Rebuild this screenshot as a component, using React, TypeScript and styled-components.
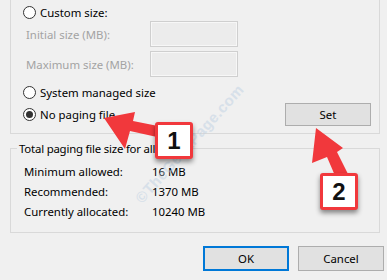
import styled, { createGlobalStyle } from "styled-components"

const Global = createGlobalStyle`
    html, body {
        margin: 0;
        padding: 0;
        background: #f0f0f0;
    }
    body {
        font-family: "Noto Sans", "Open Sans", sans-serif;
        font-size: 11.4px;
        color: #000;
    }
`

export default function App() {
    return (
        <Page>
            <Global />
            <TopGroup>
                <RadioRow>
                    <Radio />
                    <span>Custom size:</span>
                </RadioRow>
                <FieldRow>
                    <FieldLabel>Initial size (MB):</FieldLabel>
                    <TextBox disabled />
                </FieldRow>
                <FieldRow $gap={4}>
                    <FieldLabel>Maximum size (MB):</FieldLabel>
                    <TextBox disabled />
                </FieldRow>
                <RadioRow $top={7}>
                    <Radio />
                    <span>System managed size</span>
                </RadioRow>
                <SetRow>
                    <RadioRow>
                        <Radio $checked />
                        <span>No paging file</span>
                    </RadioRow>
                    <Button $w={86} $h={23}>Set</Button>
                </SetRow>
            </TopGroup>

            <TotalGroup>
                <Legend>Total paging file size for all drives</Legend>
                <StatRow>
                    <StatLabel>Minimum allowed:</StatLabel>
                    <span>16 MB</span>
                </StatRow>
                <StatRow>
                    <StatLabel>Recommended:</StatLabel>
                    <span>1370 MB</span>
                </StatRow>
                <StatRow>
                    <StatLabel>Currently allocated:</StatLabel>
                    <span>10240 MB</span>
                </StatRow>
            </TotalGroup>

            <Footer>
                <Button $w={86} $h={25} $primary>OK</Button>
                <Button $w={86} $h={25}>Cancel</Button>
            </Footer>

            <Watermark>©TheGeekPage.com</Watermark>

            <Arrows width="387" height="280" viewBox="0 0 387 280">
                <polygon
                    fill="#f1383c"
                    points="104,118 135,112 133,121 158,126 157,137 130,131 125,149"
                />
                <polygon
                    fill="#f1383c"
                    points="316,128 343,148 337,152 348,174 336,178 327,157 312,163"
                />
            </Arrows>
            <Step $x={155} $y={122}>1</Step>
            <Step $x={320} $y={173}>2</Step>
        </Page>
    )
}

const Page = styled.div`
    position: relative;
    width: 387px;
    height: 280px;
    overflow: hidden;
    padding-left: 10px;
    box-sizing: border-box;
`

const TopGroup = styled.div`
    margin-top: -10px;
    width: 370px;
    box-sizing: border-box;
    border: 1px solid #d9d9d9;
    padding: 13px 8px 7px 12px;
    display: flex;
    flex-direction: column;
`

const RadioRow = styled.label<{ $top?: number }>`
    display: flex;
    align-items: center;
    gap: 4px;
    height: 17px;
    margin-top: ${(p) => p.$top || 0}px;
    white-space: nowrap;
`

const Radio = styled.span<{ $checked?: boolean }>`
    width: 13px;
    height: 13px;
    box-sizing: border-box;
    border-radius: 50%;
    border: 1px solid #333;
    background: #fff;
    display: flex;
    align-items: center;
    justify-content: center;
    &::after {
        content: "";
        display: ${(p) => (p.$checked ? "block" : "none")};
        width: 7px;
        height: 7px;
        border-radius: 50%;
        background: #333;
    }
`

const FieldRow = styled.div<{ $gap?: number }>`
    display: flex;
    align-items: center;
    height: 26px;
    margin-top: ${(p) => p.$gap || 0}px;
`

const FieldLabel = styled.span`
    width: 124px;
    padding-left: 3px;
    color: #a3a3a3;
    white-space: nowrap;
`

const TextBox = styled.input`
    width: 88px;
    height: 26px;
    box-sizing: border-box;
    border: 1px solid #cfcfcf;
    box-shadow: inset 0 0 0 1px #f7f7f7;
    background: #ececec;
    margin: 0;
`

const SetRow = styled.div`
    display: flex;
    align-items: center;
    justify-content: space-between;
    margin-top: 2px;
    height: 23px;
`

const Button = styled.button<{ $w: number; $h: number; $primary?: boolean }>`
    width: ${(p) => p.$w}px;
    height: ${(p) => p.$h}px;
    box-sizing: border-box;
    margin: 0;
    padding: 0;
    font: inherit;
    color: #000;
    background: #e1e1e1;
    border: ${(p) => (p.$primary ? "2px solid #0078d7" : "1px solid #adadad")};
`

const TotalGroup = styled.fieldset`
    margin: 7px 0 0 0;
    width: 370px;
    box-sizing: border-box;
    border: 1px solid #d9d9d9;
    padding: 5px 0 11px 13px;
    min-height: 0;
`

const Legend = styled.legend`
    padding: 0 2px;
    margin-left: -7px;
    letter-spacing: -0.2px;
    white-space: nowrap;
`

const StatRow = styled.div`
    display: flex;
    height: 20px;
    align-items: center;
`

const StatLabel = styled.span`
    width: 128px;
`

const Footer = styled.div`
    display: flex;
    gap: 9px;
    margin-top: 13px;
    padding-left: 193px;
`

const Watermark = styled.div`
    position: absolute;
    left: 138px;
    top: 192px;
    transform: rotate(-48deg);
    transform-origin: left center;
    font-family: "Liberation Sans", Arial, sans-serif;
    font-weight: bold;
    font-size: 15px;
    letter-spacing: 0.5px;
    color: #b9cde2;
    opacity: 0.45;
    white-space: nowrap;
    pointer-events: none;
`

const Arrows = styled.svg`
    position: absolute;
    left: 0;
    top: 0;
    pointer-events: none;
`

const Step = styled.div<{ $x: number; $y: number }>`
    position: absolute;
    left: ${(p) => p.$x}px;
    top: ${(p) => p.$y}px;
    width: 38px;
    height: 37px;
    box-sizing: border-box;
    border: 3px solid #f1383c;
    border-radius: 3px;
    background: #fff;
    box-shadow: 0 3px 5px rgba(0, 0, 0, 0.45);
    display: flex;
    align-items: center;
    justify-content: center;
    font-family: "Liberation Sans", Arial, sans-serif;
    font-weight: bold;
    font-size: 24px;
    color: #111;
`
